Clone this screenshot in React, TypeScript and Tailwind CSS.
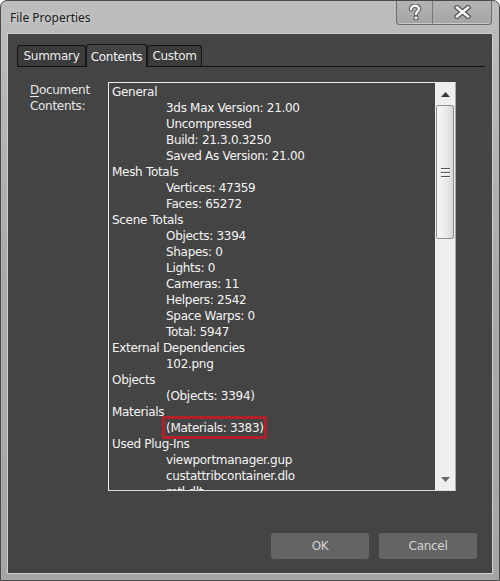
import React from "react";

type Item = { text: string; indent?: boolean; mark?: boolean };

const items: Item[] = [
  { text: "General" },
  { text: "3ds Max Version: 21.00", indent: true },
  { text: "Uncompressed", indent: true },
  { text: "Build: 21.3.0.3250", indent: true },
  { text: "Saved As Version: 21.00", indent: true },
  { text: "Mesh Totals" },
  { text: "Vertices: 47359", indent: true },
  { text: "Faces: 65272", indent: true },
  { text: "Scene Totals" },
  { text: "Objects: 3394", indent: true },
  { text: "Shapes: 0", indent: true },
  { text: "Lights: 0", indent: true },
  { text: "Cameras: 11", indent: true },
  { text: "Helpers: 2542", indent: true },
  { text: "Space Warps: 0", indent: true },
  { text: "Total: 5947", indent: true },
  { text: "External Dependencies" },
  { text: "102.png", indent: true },
  { text: "Objects" },
  { text: "(Objects: 3394)", indent: true },
  { text: "Materials" },
  { text: "(Materials: 3383)", indent: true, mark: true },
  { text: "Used Plug-Ins" },
  { text: "viewportmanager.gup", indent: true },
  { text: "custattribcontainer.dlo", indent: true },
  { text: "mtl.dlt", indent: true },
];

const uiFont = "font-['DejaVu_Sans',Verdana,sans-serif] text-[12px] tracking-[-0.3px]";

function Tab({ label, active, w }: { label: string; active?: boolean; w: string }) {
  return active ? (
    <div
      className={`${w} h-[23px] -mb-px flex items-center justify-center rounded-t-[3px] border border-b-0 border-[#151515] bg-[#444444] text-[#f2f2f2] pt-[1px]`}
    >
      {label}
    </div>
  ) : (
    <div
      className={`${w} h-[21px] flex items-center justify-center rounded-t-[3px] border border-b-0 border-[#151515] bg-[#3b3b3b] text-[#ececec]`}
    >
      {label}
    </div>
  );
}

export default function App() {
  return (
    <div className="w-[500px] h-[581px] relative overflow-hidden rounded-t-[7px] border border-[#4a4a4a] bg-gradient-to-b from-[#bdbdbd] via-[#a9a9a9] to-[#a6a6a6]">
      {/* title bar */}
      <div className="h-[32px] flex items-start pl-[9px] pt-[8px]">
        <span className="font-['Noto_Sans',sans-serif] text-[12px] leading-[18px] text-[#1c1c1c] [text-shadow:0_0_7px_rgba(235,235,235,0.9)]">
          File Properties
        </span>
      </div>

      {/* caption buttons */}
      <div className="absolute top-[-1px] right-[7px] flex h-[25px] rounded-b-[4px] border border-t-0 border-[#6e6e6e] bg-gradient-to-b from-[#b4b4b4] to-[#a4a4a4] shadow-[inset_0_-1px_0_rgba(230,230,230,0.6)]">
        <div className="w-[36px] h-full flex items-center justify-center border-r border-[#7a7a7a]">
          <svg width="14" height="17" viewBox="0 0 14 17">
            <path
              d="M3 5.2 C3 2.8 4.8 1.8 7 1.8 C9.4 1.8 11 3 11 5 C11 7.2 8 7.6 8 10"
              fill="none"
              stroke="#5a5a5a"
              strokeWidth="4.4"
              strokeLinecap="round"
            />
            <path
              d="M3 5.2 C3 2.8 4.8 1.8 7 1.8 C9.4 1.8 11 3 11 5 C11 7.2 8 7.6 8 10"
              fill="none"
              stroke="#f4f4f4"
              strokeWidth="2.4"
              strokeLinecap="round"
            />
            <rect x="5.6" y="11.6" width="4.8" height="4.6" rx="0.8" fill="#5a5a5a" />
            <rect x="6.6" y="12.6" width="2.8" height="2.6" fill="#f4f4f4" />
          </svg>
        </div>
        <div className="w-[58px] h-full flex items-center justify-center">
          <svg width="17" height="14" viewBox="0 0 17 14">
            <path d="M3 2.5 L14 11.5 M14 2.5 L3 11.5" stroke="#555555" strokeWidth="5" strokeLinecap="square" />
            <path d="M3 2.5 L14 11.5 M14 2.5 L3 11.5" stroke="#f4f4f4" strokeWidth="2.6" strokeLinecap="square" />
          </svg>
        </div>
      </div>

      {/* client area */}
      <div className={`ml-[6px] mr-[6px] h-[541px] border border-[#cfcfcf] bg-[#444444] flex flex-col ${uiFont}`}>
        {/* tab strip */}
        <div className="mt-[10px] ml-[9px] mr-[7px] h-[23px] flex items-end border-b border-[#111111]">
          <Tab label="Summary" w="w-[69px]" />
          <Tab label="Contents" active w="w-[61px]" />
          <Tab label="Custom" w="w-[55px]" />
        </div>

        {/* body */}
        <div className="mt-[15px] flex pl-[22px]">
          <div className="w-[78px] leading-[16px] text-[#e6e6e6]">
            <div>
              <span className="underline underline-offset-[2px]">D</span>ocument
            </div>
            <div>Contents:</div>
          </div>

          <div className="w-[348px] h-[409px] flex border border-[#ececec] border-r-[#a8a8a8] border-b-[#dcdcdc] bg-[#444444]">
            <div className="flex-1 overflow-hidden pl-[3px] pt-[1px] text-[#f4f4f4] leading-[16px]">
              {items.map((it, i) => (
                <div key={i} className={`h-[16px] whitespace-nowrap ${it.indent ? "pl-[54px]" : ""}`}>
                  {it.mark ? (
                    <span className="relative">
                      {it.text}
                      <span className="absolute -left-[4px] -right-[3px] -top-[5px] -bottom-[4px] border-[3px] border-[#b0212a]" />
                    </span>
                  ) : (
                    it.text
                  )}
                </div>
              ))}
            </div>

            {/* scrollbar */}
            <div className="w-[20px] h-full bg-[#eeeeee] flex flex-col items-center">
              <div className="h-[22px] w-full flex items-center justify-center">
                <svg width="9" height="5" viewBox="0 0 9 5">
                  <path d="M4.5 0 L9 5 L0 5 Z" fill="#3a3a3a" />
                </svg>
              </div>
              <div className="w-[18px] h-[134px] rounded-[2px] border border-[#8e8e8e] bg-gradient-to-r from-[#f6f6f6] via-[#ececec] to-[#d8d8d8] flex flex-col items-center justify-center gap-[3px]">
                <div className="w-[9px] h-[1px] bg-[#555555] shadow-[0_1px_0_#ffffff]" />
                <div className="w-[9px] h-[1px] bg-[#555555] shadow-[0_1px_0_#ffffff]" />
                <div className="w-[9px] h-[1px] bg-[#555555] shadow-[0_1px_0_#ffffff]" />
              </div>
              <div className="flex-1" />
              <div className="h-[22px] w-full flex items-center justify-center">
                <svg width="9" height="5" viewBox="0 0 9 5">
                  <path d="M0 0 L9 0 L4.5 5 Z" fill="#6a6a6a" />
                </svg>
              </div>
            </div>
          </div>
        </div>

        {/* buttons */}
        <div className="mt-[42px] flex justify-end gap-[10px] pr-[15px]">
          <div className="w-[98px] h-[26px] rounded-[3px] bg-[#646464] flex items-center justify-center text-[#d4d4d4]">
            OK
          </div>
          <div className="w-[98px] h-[26px] rounded-[3px] bg-[#646464] flex items-center justify-center text-[#d4d4d4]">
            Cancel
          </div>
        </div>
      </div>
    </div>
  );
}
